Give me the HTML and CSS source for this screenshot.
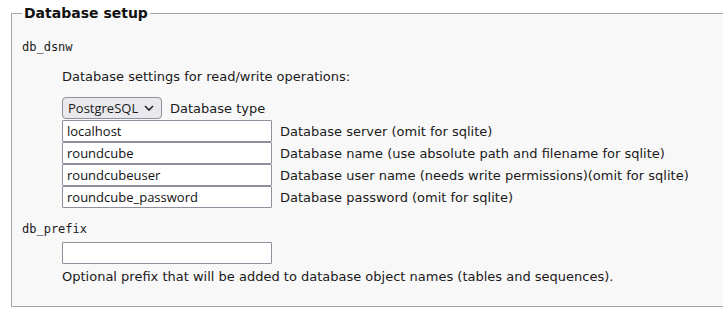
FILE: index.html
```html
<!DOCTYPE html>
<html lang="en">

<head>
  <meta charset="UTF-8" />
  <meta name="viewport" content="width=device-width, initial-scale=1.0" />
  <title>Roundcube Installer</title>
  <link rel="stylesheet" href="styles.css">
</head>

<body>
  <fieldset class="setup">
    <legend>Database setup</legend>

    <div class="option">
      <div class="option-name">db_dsnw</div>
      <div class="option-body">
        <p class="hint">Database settings for read/write operations:</p>
        <div class="db-rows">
          <div class="db-row db-row-type">
            <span class="select-wrap">
              <select class="db-type">
                <option>PostgreSQL</option>
              </select>
              <svg class="chevron" width="10" height="6" viewBox="0 0 10 6">
                <path d="M1 1 L5 5 L9 1" fill="none" stroke="#222" stroke-width="1.6" />
              </svg>
            </span>
            <span class="row-label">Database type</span>
          </div>
          <div class="db-row">
            <input type="text" class="field" value="localhost" />
            <span class="row-label">Database server (omit for sqlite)</span>
          </div>
          <div class="db-row">
            <input type="text" class="field" value="roundcube" />
            <span class="row-label">Database name (use absolute path and filename for sqlite)</span>
          </div>
          <div class="db-row">
            <input type="text" class="field" value="roundcubeuser" />
            <span class="row-label">Database user name (needs write permissions)(omit for sqlite)</span>
          </div>
          <div class="db-row">
            <input type="text" class="field" value="roundcube_password" />
            <span class="row-label">Database password (omit for sqlite)</span>
          </div>
        </div>
      </div>
    </div>

    <div class="option option-prefix">
      <div class="option-name">db_prefix</div>
      <div class="option-body">
        <input type="text" class="field" value="" />
        <p class="hint hint-after">Optional prefix that will be added to database object names (tables and sequences).</p>
      </div>
    </div>
  </fieldset>
</body>

</html>
```

FILE: styles.css
```css
* {
  box-sizing: border-box;
}

body {
  margin: 0;
  overflow: hidden;
  background: #ffffff;
  color: #1a1a1a;
  font-family: "DejaVu Sans", Verdana, sans-serif;
  font-size: 13px;
}

/* right edge of the box is cut off by the window */
.setup {
  margin: 4px 0 0 11px;
  padding: 17px 10px 21px 10px;
  border: 1px solid #a6a6a6;
  border-right: none;
  background: #f8f8f8;
  min-width: 0;
}

.setup legend {
  padding: 0 2px;
  font-size: 14px;
  font-weight: bold;
  line-height: 18px;
  color: #111;
}

.option-name {
  font-family: "DejaVu Sans Mono", monospace;
  font-size: 12px;
  line-height: 16px;
}

.option-body {
  padding-left: 40px;
}

.hint {
  margin: 14px 0 0 0;
  line-height: 16px;
}

.db-rows {
  margin-top: 12px;
  display: flex;
  flex-direction: column;
}

.db-row {
  display: flex;
  align-items: center;
  gap: 8px;
  height: 22px;
  white-space: nowrap;
}

.db-row-type {
  height: 23px;
  padding-bottom: 1px;
}

.select-wrap {
  position: relative;
  display: inline-block;
  height: 22px;
}

.db-type {
  appearance: none;
  -webkit-appearance: none;
  width: 100px;
  height: 22px;
  margin: 0;
  padding: 0 0 0 5px;
  border: 1px solid #8f8f9d;
  border-radius: 4px;
  background: #e9e9ed;
  color: #1a1a1a;
  font-family: "Open Sans", "Noto Sans", sans-serif;
  font-size: 13px;
}

.chevron {
  position: absolute;
  right: 8px;
  top: 8px;
  pointer-events: none;
}

.field {
  width: 210px;
  height: 22px;
  margin: 0;
  padding: 0 4px;
  border: 1px solid #8f8f9d;
  border-radius: 1px;
  background: #ffffff;
  color: #111;
  font-family: "Open Sans", "Noto Sans", sans-serif;
  font-size: 13px;
}

.option-prefix {
  margin-top: 13px;
}

.option-prefix .option-body {
  margin-top: 5px;
}

.hint-after {
  margin-top: 5px;
}
```
